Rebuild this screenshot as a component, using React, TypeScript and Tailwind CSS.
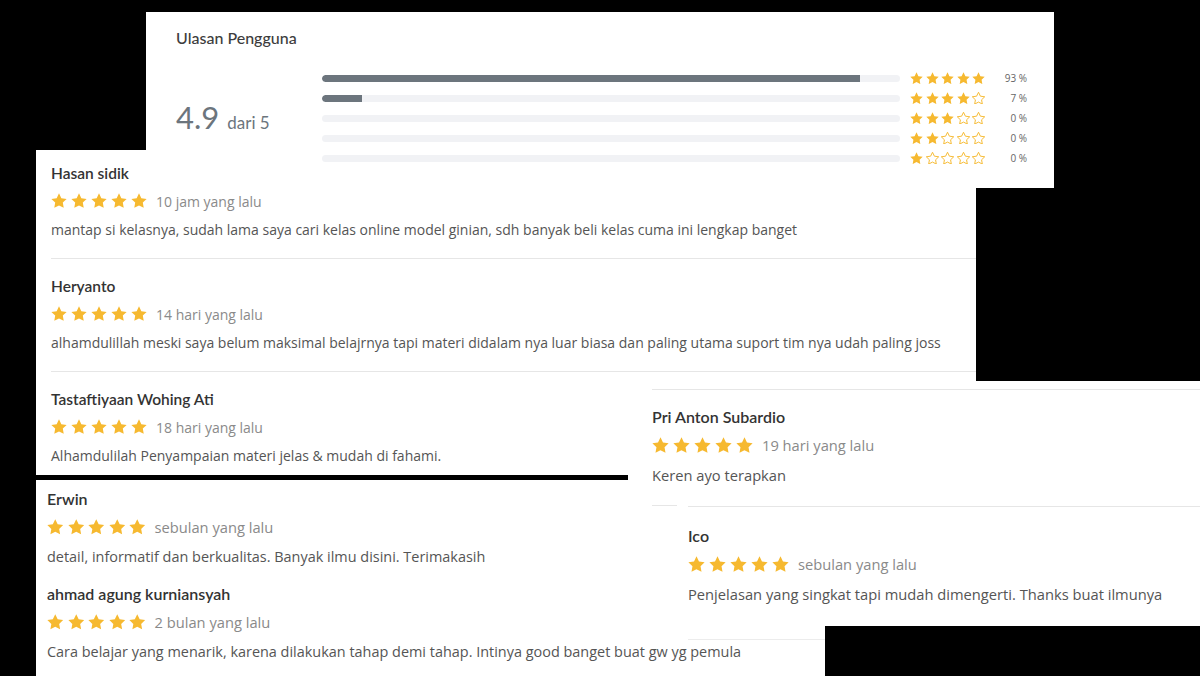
import React from "react";

type Review = { name: string; when: string; text: string };

const STAR = "M12 2.2l2.95 6.1 6.7.95-4.85 4.7 1.15 6.65L12 17.45 6.05 20.6 7.2 13.95 2.35 9.25l6.7-.95L12 2.2z";

function Star({ size, filled = true }: { size: number; filled?: boolean }) {
  return (
    <svg width={size} height={size * 0.95} viewBox="1.9 1.8 20.2 19.2" className="shrink-0">
      <path
        d={STAR}
        fill={filled ? "#f6b930" : "none"}
        stroke="#f6b930"
        strokeWidth={filled ? 0 : 1.5}
        strokeLinejoin="round"
      />
    </svg>
  );
}

function Stars({ n = 5, size, gap }: { n?: number; size: number; gap: string }) {
  return (
    <div className={`flex items-center ${gap}`}>
      {[0, 1, 2, 3, 4].map((i) => (
        <Star key={i} size={size} filled={i < n} />
      ))}
    </div>
  );
}

const body = { fontFamily: '"Open Sans", "DejaVu Sans", sans-serif' };
const head = { fontFamily: 'Lato, "Noto Sans", sans-serif' };

// size: "sm" for the middle panel, "md" for the bottom-left one, "lg" for the right ones
function ReviewItem({ r, size = "sm" }: { r: Review; size?: "sm" | "md" | "lg" }) {
  const big = size !== "sm";
  return (
    <div>
      <div className={`${big ? "text-[16px]" : "text-[15.5px]"} leading-5 font-semibold text-[#333]`} style={head}>
        {r.name}
      </div>
      <div className="mt-[8px] flex items-center gap-[9px] h-5">
        {size === "lg" && <Stars size={17} gap="gap-[4px]" />}
        {size === "md" && <Stars size={16.5} gap="gap-[4px]" />}
        {size === "sm" && <Stars size={16} gap="gap-[4px]" />}
        <span className={`${big ? "text-[14.7px]" : "text-[14px]"} text-[#8a8a8a]`} style={body}>
          {r.when}
        </span>
      </div>
      <div
        className={`${size === "lg" ? "mt-[10px] text-[14.7px]" : size === "md" ? "mt-[10px] text-[14.45px]" : "mt-[9px] text-[14px]"} leading-5 text-[#555]`}
        style={body}
      >
        {r.text}
      </div>
    </div>
  );
}

const dist = [
  { n: 5, pct: 93 },
  { n: 4, pct: 7 },
  { n: 3, pct: 0 },
  { n: 2, pct: 0 },
  { n: 1, pct: 0 },
];

const mid: Review[] = [
  {
    name: "Hasan sidik",
    when: "10 jam yang lalu",
    text: "mantap si kelasnya, sudah lama saya cari kelas online model ginian, sdh banyak beli kelas cuma ini lengkap banget",
  },
  {
    name: "Heryanto",
    when: "14 hari yang lalu",
    text: "alhamdulillah meski saya belum maksimal belajrnya tapi materi didalam nya luar biasa dan paling utama suport tim nya udah paling joss",
  },
  {
    name: "Tastaftiyaan Wohing Ati",
    when: "18 hari yang lalu",
    text: "Alhamdulilah Penyampaian materi jelas & mudah di fahami.",
  },
];

const bottom: Review[] = [
  { name: "Erwin", when: "sebulan yang lalu", text: "detail, informatif dan berkualitas. Banyak ilmu disini. Terimakasih" },
  {
    name: "ahmad agung kurniansyah",
    when: "2 bulan yang lalu",
    text: "Cara belajar yang menarik, karena dilakukan tahap demi tahap. Intinya good banget buat gw yg pemula",
  },
];

export default function App() {
  return (
    <div className="relative w-[1200px] h-[676px] bg-black overflow-hidden">
      {/* middle reviews */}
      <div className="absolute left-[36px] top-[150px] w-[940px] h-[325px] bg-white pt-[13px] pl-[15px]">
        {mid.map((r, i) => (
          <div key={r.name} className={i < mid.length - 1 ? "pb-[18px] mb-[17px] border-b border-[#e6e6e6]" : ""}>
            <ReviewItem r={r} />
          </div>
        ))}
      </div>

      {/* rating summary, pasted on top */}
      <div className="absolute left-[146px] top-[12px] w-[908px] h-[153px] bg-white pt-4 pl-[30px]">
        <div className="text-[16px] leading-5 text-[#3d3d3d] font-medium" style={head}>
          Ulasan Pengguna
        </div>
        <div className="mt-5 flex items-center">
          <div className="w-[146px] flex items-baseline gap-[8px] text-[#6c757d] pt-[2px]" style={head}>
            <span className="text-[31px] leading-none">4.9</span>
            <span className="text-[17px]">dari 5</span>
          </div>
          <div className="flex flex-col">
            {dist.map((d) => (
              <div key={d.n} className="h-5 flex items-center">
                <div className="w-[578px] h-[7px] rounded-full bg-[#f1f2f5] overflow-hidden">
                  <div className="h-full rounded-l-full bg-[#6c757d]" style={{ width: `${d.pct}%` }} />
                </div>
                <div className="ml-[10px]">
                  <Stars n={d.n} size={13} gap="gap-[2.5px]" />
                </div>
                <div className="w-[42px] text-right text-[10px] text-[#666]" style={body}>
                  {d.pct} %
                </div>
              </div>
            ))}
          </div>
        </div>
        <div className="absolute left-[830px] top-[153px] w-[78px] h-[23px] bg-white" />
      </div>

      {/* bottom left reviews */}
      <div className="absolute left-[36px] top-[480px] w-[789px] h-[196px] bg-white pt-[9px] pl-[11px]">
        <div className="flex flex-col gap-[17px]">
          {bottom.map((r) => (
            <ReviewItem key={r.name} r={r} size="md" />
          ))}
        </div>
        <div className="absolute left-[652px] right-0 top-[159px] border-t border-[#ececec]" />
      </div>

      {/* right reviews */}
      <div className="absolute left-[628px] top-[381px] w-[572px] h-[245px] bg-white pt-2 pl-6">
        <div className="border-t border-[#e6e6e6] pt-[17px]">
          <ReviewItem r={{ name: "Pri Anton Subardio", when: "19 hari yang lalu", text: "Keren ayo terapkan" }} size="lg" />
        </div>
        <div className="mt-5 border-t border-[#e6e6e6]" />
      </div>

      <div className="absolute left-[677px] top-[500px] w-[523px] h-[126px] bg-white pt-[6px] pl-[11px]">
        <div className="border-t border-[#e6e6e6] pt-[19px]">
          <ReviewItem
            r={{
              name: "Ico",
              when: "sebulan yang lalu",
              text: "Penjelasan yang singkat tapi mudah dimengerti. Thanks buat ilmunya",
            }}
            size="lg"
          />
        </div>
      </div>
    </div>
  );
}
